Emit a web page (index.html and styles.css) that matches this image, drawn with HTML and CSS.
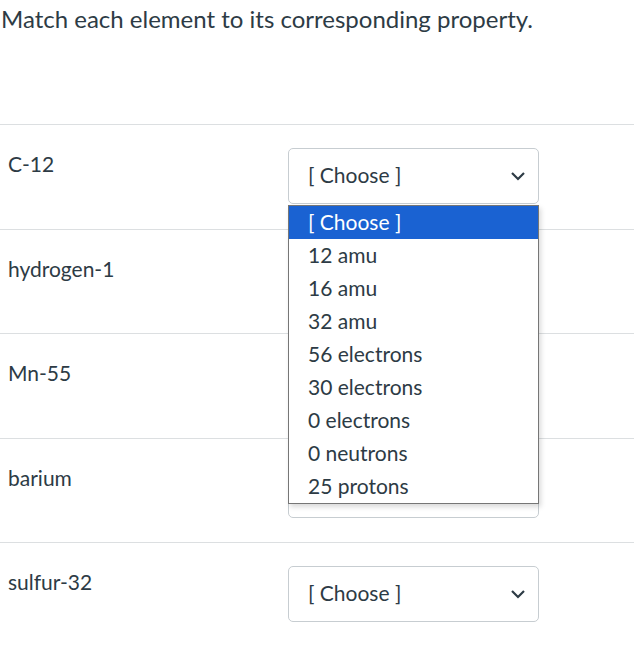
FILE: index.html
```html
<!DOCTYPE html>
<html lang="en">
<head>
    <meta charset="UTF-8">
    <meta name="viewport" content="width=device-width, initial-scale=1.0">
    <title>Matching Question</title>
    <link rel="stylesheet" href="styles.css">
</head>
<body>

<div class="question">
    <p class="question-text">Match each element to its corresponding property.</p>

    <div class="answers">
        <div class="answer-row">
            <div class="answer-label">C-12</div>
            <div class="select-wrap">
                <div class="select open">
                    <span>[ Choose ]</span>
                    <svg class="chevron" width="16" height="10" viewBox="0 0 16 10"><path d="M2 2l6 6 6-6" fill="none" stroke="#2d3b45" stroke-width="2.2"/></svg>
                </div>
                <ul class="options">
                    <li class="selected">[ Choose ]</li>
                    <li>12 amu</li>
                    <li>16 amu</li>
                    <li>32 amu</li>
                    <li>56 electrons</li>
                    <li>30 electrons</li>
                    <li>0 electrons</li>
                    <li>0 neutrons</li>
                    <li>25 protons</li>
                </ul>
            </div>
        </div>
        <div class="answer-row">
            <div class="answer-label">hydrogen-1</div>
            <div class="select-wrap">
                <div class="select">
                    <span>[ Choose ]</span>
                    <svg class="chevron" width="16" height="10" viewBox="0 0 16 10"><path d="M2 2l6 6 6-6" fill="none" stroke="#2d3b45" stroke-width="2.2"/></svg>
                </div>
            </div>
        </div>
        <div class="answer-row">
            <div class="answer-label">Mn-55</div>
            <div class="select-wrap">
                <div class="select">
                    <span>[ Choose ]</span>
                    <svg class="chevron" width="16" height="10" viewBox="0 0 16 10"><path d="M2 2l6 6 6-6" fill="none" stroke="#2d3b45" stroke-width="2.2"/></svg>
                </div>
            </div>
        </div>
        <div class="answer-row">
            <div class="answer-label">barium</div>
            <div class="select-wrap">
                <div class="select">
                    <span>[ Choose ]</span>
                    <svg class="chevron" width="16" height="10" viewBox="0 0 16 10"><path d="M2 2l6 6 6-6" fill="none" stroke="#2d3b45" stroke-width="2.2"/></svg>
                </div>
            </div>
        </div>
        <div class="answer-row">
            <div class="answer-label">sulfur-32</div>
            <div class="select-wrap">
                <div class="select">
                    <span>[ Choose ]</span>
                    <svg class="chevron" width="16" height="10" viewBox="0 0 16 10"><path d="M2 2l6 6 6-6" fill="none" stroke="#2d3b45" stroke-width="2.2"/></svg>
                </div>
            </div>
        </div>
    </div>
</div>

</body>
</html>
```

FILE: styles.css
```css
body {
    font-family: 'Lato', 'Liberation Sans', sans-serif;
    color: #2d3b45;
    background: #fff;
    margin: 0;
}
.question-text {
    font-size: 24px;
    line-height: 38px;
    margin: 0;
    padding: 0 0 0 1px;
    height: 124px;
}
.answer-row {
    display: flex;
    border-top: 1px solid #dcdfe1;
    padding: 23px 0 24.5px;
}
.answer-label {
    width: 280px;
    padding: 2px 0 0 8px;
    font-size: 21px;
    line-height: 28px;
}
.select-wrap {
    position: relative;
}
.select {
    box-sizing: border-box;
    width: 251px;
    height: 56px;
    border: 1px solid #c7cdd1;
    border-radius: 5px;
    padding: 0 12px 3px 19px;
    display: flex;
    align-items: center;
    justify-content: space-between;
    font-size: 21px;
    background: #fff;
}
.select .chevron {
    margin-top: 3px;
}
.options {
    position: absolute;
    top: 57px;
    left: 0;
    z-index: 2;
    box-sizing: border-box;
    width: 251px;
    margin: 0;
    padding: 0;
    list-style: none;
    background: #fff;
    border: 1px solid #767676;
    box-shadow: 2px 3px 5px rgba(0, 0, 0, 0.15);
}
.options li {
    height: 33px;
    line-height: 31px;
    padding-left: 19px;
    font-size: 21px;
}
.options li.selected {
    background-color: #1a62d2;
    color: #fff;
}
```
